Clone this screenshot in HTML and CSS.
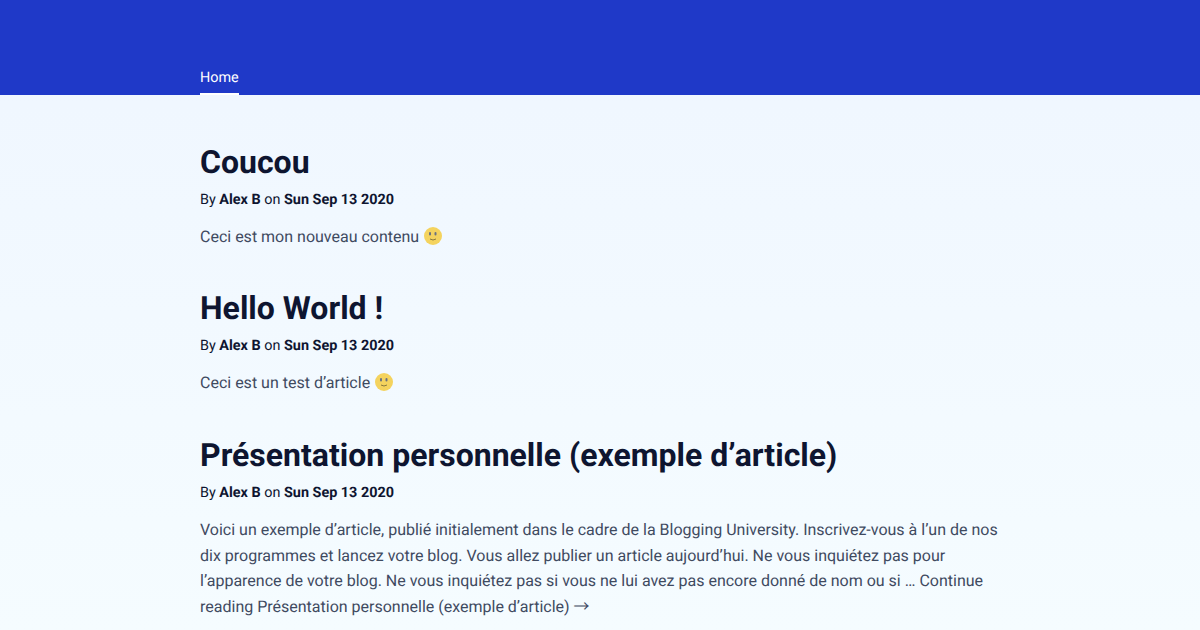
FILE: index.html
```html
<!DOCTYPE html>
<html lang="en">
<head>
    <meta charset="UTF-8">
    <title>Blog</title>
    <link rel="stylesheet" href="styles.css">
</head>
<body>
    <header class="site-header">
        <nav class="site-nav">
            <a class="nav-link" href="#">Home</a>
        </nav>
    </header>

    <main class="post-list">
        <article class="post">
            <h2 class="post-title">Coucou</h2>
            <p class="post-meta">By <strong>Alex B</strong> on <strong>Sun Sep 13 2020</strong></p>
            <p class="post-text">Ceci est mon nouveau contenu <svg class="smiley" viewBox="0 0 18 18"><circle cx="9" cy="9" r="9" fill="#f4d35e"/><rect x="5" y="5" width="2" height="3.5" rx="1" fill="#6b7280"/><rect x="10.5" y="5" width="2" height="3.5" rx="1" fill="#6b7280"/><path d="M6 12q3 2 6 0" fill="none" stroke="#8a7a3c" stroke-width="1"/></svg></p>
        </article>
        <article class="post">
            <h2 class="post-title">Hello World !</h2>
            <p class="post-meta">By <strong>Alex B</strong> on <strong>Sun Sep 13 2020</strong></p>
            <p class="post-text">Ceci est un test d’article <svg class="smiley" viewBox="0 0 18 18"><circle cx="9" cy="9" r="9" fill="#f4d35e"/><rect x="5" y="5" width="2" height="3.5" rx="1" fill="#6b7280"/><rect x="10.5" y="5" width="2" height="3.5" rx="1" fill="#6b7280"/><path d="M6 12q3 2 6 0" fill="none" stroke="#8a7a3c" stroke-width="1"/></svg></p>
        </article>
        <article class="post">
            <h2 class="post-title">Présentation personnelle (exemple d’article)</h2>
            <p class="post-meta">By <strong>Alex B</strong> on <strong>Sun Sep 13 2020</strong></p>
            <p class="post-text">Voici un exemple d’article, publié initialement dans le cadre de la Blogging University. Inscrivez-vous à l’un de nos dix programmes et lancez votre blog. Vous allez publier un article aujourd’hui. Ne vous inquiétez pas pour l’apparence de votre blog. Ne vous inquiétez pas si vous ne lui avez pas encore donné de nom ou si … Continue reading Présentation personnelle (exemple d’article) →</p>
        </article>
    </main>
</body>
</html>
```

FILE: styles.css
```css
html, body {
    height: 100%;
}
body {
    margin: 0;
    font-family: Roboto, "Noto Sans CJK SC", sans-serif;
    font-size: 16px;
    line-height: 1.6;
    color: #3f4a5f;
    background: linear-gradient(#eff6ff, #f5fcff);
    overflow: hidden;
    text-rendering: geometricPrecision;
}
.site-header {
    height: 95px;
    background: #1f39c8;
    display: flex;
    align-items: flex-end;
}
.site-nav {
    width: 800px;
    margin: 0 auto;
    display: flex;
}
.nav-link {
    color: white;
    font-size: 14.4px;
    line-height: 22px;
    padding-top: 1px;
    padding-bottom: 4px;
    border-bottom: 2px solid white;
    text-decoration: none;
}
.post-list {
    width: 800px;
    margin: 0 auto;
    padding-top: 49px;
}
.post {
    margin-bottom: 40.9px;
}
.post-title {
    margin: 0 0 9px;
    font-size: 32px;
    line-height: 36px;
    font-weight: 700;
    color: #0e1530;
}
.post-meta {
    margin: 0 0 13px;
    font-size: 14.4px;
    line-height: 22px;
    color: #0e1530;
}
.post-meta strong {
    font-weight: 700;
}
.post-text {
    margin: 0;
}
.smiley {
    width: 18px;
    height: 18px;
    vertical-align: -3px;
    margin-left: 1px;
}
```
